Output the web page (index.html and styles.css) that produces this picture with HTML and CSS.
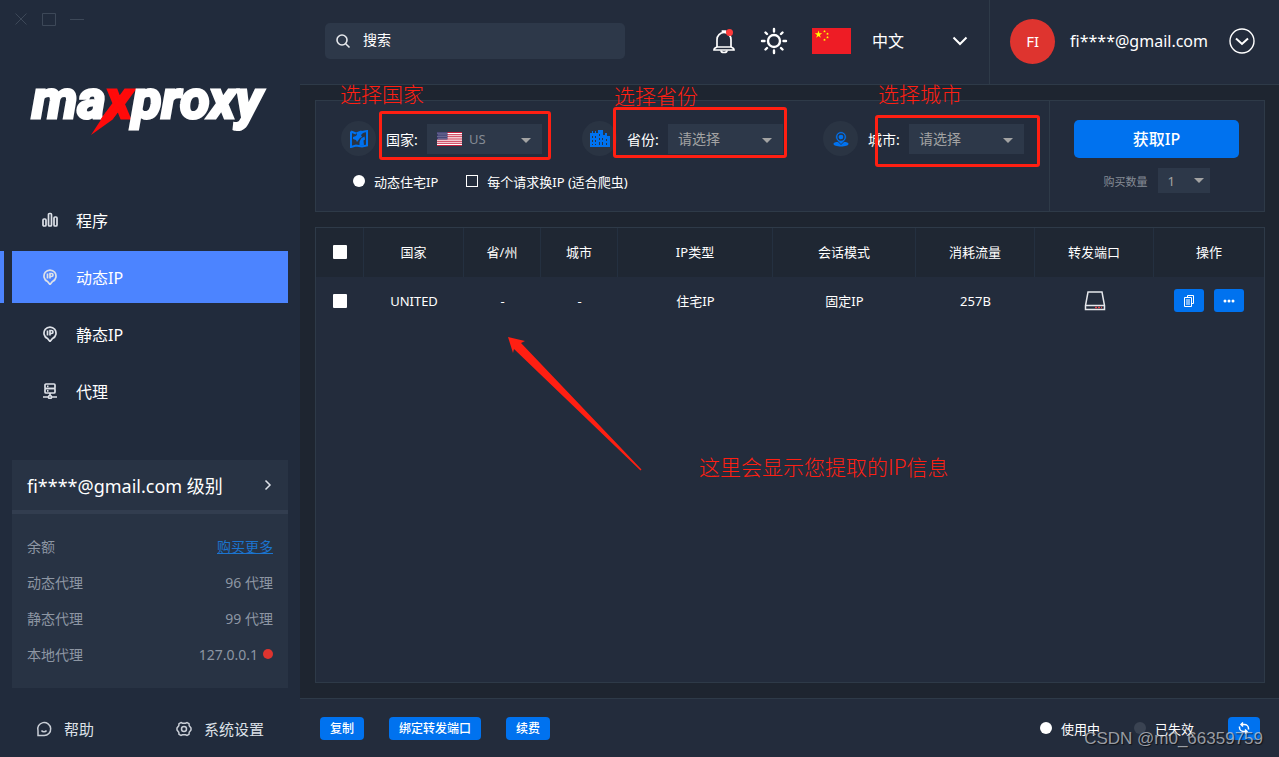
FILE: index.html
```html
<!DOCTYPE html>
<html lang="zh-CN">
<head>
    <meta charset="UTF-8">
    <title>maxproxy</title>
    <link rel="stylesheet" href="styles.css">
</head>
<body>
    <aside class="sidebar">
        <div class="window-buttons">
            <button type="button" aria-label="关闭">
                <svg width="14" height="14" viewBox="0 0 14 14"><path d="M1.500 1.500l11 11M12.500 1.500l-11 11"/></svg>
            </button>
            <button type="button" aria-label="最大化">
                <svg width="14" height="14" viewBox="0 0 14 14"><path d="M.5 1.500h13v12h-13z"/></svg>
            </button>
            <button type="button" aria-label="最小化">
                <svg width="14" height="14" viewBox="0 0 14 14"><path d="M0 7.500h14"/></svg>
            </button>
        </div>

        <div class="logo">
            <span>ma<span class="logo-x">x</span>proxy</span>
            <svg class="logo-tail" width="28" height="28" viewBox="0 0 28 28"><path d="M15 5l13-1-7 9L0 28z"/></svg>
        </div>

        <nav class="menu">
            <a href="#">
                <svg width="16" height="16" viewBox="0 0 16 16"><rect x="1" y="7" width="3" height="7" rx="1"/><rect x="6.500" y="1.500" width="3" height="12.500" rx="1"/><rect x="12" y="5" width="3" height="9" rx="1"/></svg>
                程序
            </a>
            <a href="#" class="active">
                <svg width="16" height="16" viewBox="0 0 16 16"><path d="M8 15.500L5.500 12.500a6 6 0 1 1 5 0z"/><path d="M5.500 4.500v5M8 9.500v-5h1.500a1.500 1.500 0 0 1 0 3H8"/></svg>
                动态IP
            </a>
            <a href="#">
                <svg width="16" height="16" viewBox="0 0 16 16"><path d="M8 15.500L5.500 12.500a6 6 0 1 1 5 0z"/><path d="M5.500 4.500v5M8 9.500v-5h1.500a1.500 1.500 0 0 1 0 3H8"/></svg>
                静态IP
            </a>
            <a href="#">
                <svg width="16" height="16" viewBox="0 0 16 16"><rect x="3" y="1" width="10" height="4.500" rx="1"/><rect x="3" y="5.500" width="10" height="4.500" rx="1"/><path d="M5 3.300h1.500M5 7.800h1.500M8 10v3M1 14h5M10 14h5"/><circle cx="8" cy="14" r="1.500"/></svg>
                代理
            </a>
        </nav>

        <section class="account">
            <a href="#" class="account-title">
                fi****@gmail.com 级别
                <svg width="8" height="12" viewBox="0 0 8 12"><path d="M1.500 1.500L6 6l-4.500 4.500"/></svg>
            </a>
            <div class="account-body">
                <div class="account-row"><span>余额</span><a href="#">购买更多</a></div>
                <div class="account-row"><span>动态代理</span><span>96 代理</span></div>
                <div class="account-row"><span>静态代理</span><span>99 代理</span></div>
                <div class="account-row"><span>本地代理</span><span class="local">127.0.0.1<i class="red-dot"></i></span></div>
            </div>
        </section>

        <div class="side-links">
            <a href="#">
                <svg width="16" height="16" viewBox="0 0 16 16"><path d="M2 14.500h6a6.500 6.500 0 1 0-6-4.500v2z"/><path d="M5.500 9.500a3 3 0 0 0 5 0"/></svg>
                帮助
            </a>
            <a href="#">
                <svg width="16" height="16" viewBox="0 0 16 16"><path d="M5 1.500l1.500.7h3l1.500-.7 2 1.200.2 2 1.800 2.300v2l-1.800 2.300-.2 2-2 1.200-1.500-.7h-3l-1.500.7-2-1.200-.2-2L1 9V7l1.800-2.300.2-2z"/><circle cx="8" cy="8" r="2.500"/></svg>
                系统设置
            </a>
        </div>
    </aside>

    <div class="page">
        <header class="topbar">
            <label class="search">
                <svg width="16" height="16" viewBox="0 0 16 16"><circle cx="7" cy="7" r="5"/><path d="M10.700 10.700L14.500 14.500"/></svg>
                <input type="text" placeholder="搜索" aria-label="搜索">
            </label>
            <div class="tools">
                <button type="button" class="icon-button" aria-label="通知">
                    <svg width="24" height="26" viewBox="0 0 24 26"><path d="M5 19v-7.500a7 7 0 0 1 14 0V19"/><path d="M2 22c0-1.800 1.500-2.500 3-3h14c1.500.5 3 1.200 3 3z"/><path d="M9 22.500a3 2 0 0 0 6 0M10.500 4.200v-1h3v1"/><circle class="alert" cx="17.500" cy="4.500" r="3.500"/></svg>
                </button>
                <button type="button" class="icon-button" aria-label="主题">
                    <svg class="sun" width="28" height="28" viewBox="0 0 28 28"><circle cx="14" cy="14" r="6"/><path d="M14 2v2.500M14 23.500v2.500M2 14h2.500M23.500 14h2.500M5.500 5.500l1.500 1.500M21 21l1.500 1.500M5.500 22.500l1.500-1.500M21 7l1.500-1.500"/></svg>
                </button>
                <div class="language">
                    <svg width="39" height="26" viewBox="0 0 39 26">
                        <path fill="#ee1c25" d="M0 0h39v26H0z"/>
                        <g fill="#ff0">
                            <path d="M6.500 2.600l.9 2.700h2.800L7.900 7l.9 2.700-2.300-1.700-2.300 1.700.9-2.700-2.300-1.700h2.800z"/>
                            <path d="M12.500 2l.4.800.9.1-.6.600.1.900-.8-.4-.8.400.1-.9-.6-.6.900-.1z"/>
                            <path d="M15.500 4.500l.4.800.9.1-.6.600.1.900-.8-.4-.8.400.1-.9-.6-.6.900-.1z"/>
                            <path d="M15.500 8l.4.800.9.1-.6.600.1.900-.8-.4-.8.400.1-.9-.6-.6.900-.1z"/>
                            <path d="M12.500 10.500l.4.800.9.1-.6.600.1.900-.8-.4-.8.400.1-.9-.6-.6.900-.1z"/>
                        </g>
                    </svg>
                    <select aria-label="语言"><option>中文</option></select>
                    <svg class="chevron" width="16" height="10" viewBox="0 0 16 10"><path d="M1.500 1.500L8 8l6.500-6.500"/></svg>
                </div>
            </div>
            <div class="user">
                <span class="avatar">FI</span>
                <span class="email">fi****@gmail.com</span>
                <button type="button" class="icon-button" aria-label="账户菜单">
                    <svg class="user-menu" width="26" height="26" viewBox="0 0 26 26"><circle cx="13" cy="13" r="12"/><path class="thick" d="M7 10.500l6 5.500 6-5.500"/></svg>
                </button>
            </div>
        </header>

        <main class="content">
            <form class="filters">
                <div class="filters-main">
                    <div class="fields">
                        <div class="field">
                            <span class="field-icon">
                                <svg width="18" height="18" viewBox="0 0 18 18"><path fill="none" stroke="#0072ef" stroke-width="2" d="M1 1.500l5 2M12 2l5-1v14.500l-5 1-6-1-5 1.500V1.500"/><path d="M6 2.500L11 .5l3 1.500-3 3 1 2-2 1-3 4-1-2-3-1V7l3-1 1-1.500zM11 8.500l3.500-2 .5 3-1.500 1 .5 5-4.500.5v-4z"/></svg>
                            </span>
                            <label for="country">国家:</label>
                            <div class="select">
                                <svg class="us-flag" width="25" height="14" viewBox="0 0 25 14">
                                    <path fill="#fff" d="M0 0h25v14H0z"/>
                                    <path stroke="#c8203f" stroke-width="1.100" d="M0 .5h25M0 2.700h25M0 4.800h25M0 7h25M0 9.200h25M0 11.300h25M0 13.500h25"/>
                                    <path fill="#3c3b6e" d="M0 0h10.500v7.500H0z"/>
                                    <path stroke="#b9b9d0" stroke-width=".8" stroke-dasharray="1 1" d="M.5 1.200h9.500M1.500 2.900h8.500M.5 4.600h9.500M1.500 6.300h8.500"/>
                                </svg>
                                <select id="country" class="with-flag"><option>US</option></select>
                            </div>
                            <span class="mark mark-country"></span>
                            <span class="note note-country">选择国家</span>
                        </div>
                        <div class="field">
                            <span class="field-icon">
                                <svg width="20" height="18" viewBox="0 0 20 18"><path fill-rule="evenodd" d="M0 3h2V1h1v2h2V1h1v2h2V0h5v5h2V3h2v3h3v11H0zM2 6v2h1V6zM5 6v2h1V6zM2 10v2h1v-2zM5 10v2h1v-2zM2 14v1h1v-1zM5 14v1h1v-1zM9 4v2h1V4zM9 8v2h1V8zM9 12v3h1v-3zM12 8v2h1V8zM12 12v3h1v-3zM16 9v2h1V9zM16 13v2h1v-2z"/></svg>
                            </span>
                            <label for="province">省份:</label>
                            <div class="select">
                                <select id="province"><option>请选择</option></select>
                            </div>
                            <span class="mark mark-province"></span>
                            <span class="note note-province">选择省份</span>
                        </div>
                        <div class="field">
                            <span class="field-icon">
                                <svg width="16" height="16" viewBox="0 0 16 16"><path d="M3 11h10c1.500.5 2.500 1 2.500 2 0 1.500-3.500 2.500-7.500 2.500S.5 14.500.5 13c0-1 1-1.500 2.500-2z"/><path stroke="#2a3443" stroke-width=".8" d="M8 13.500L4.200 9.800a5.400 5.400 0 1 1 7.600 0z"/><circle cx="8" cy="6" r="3" fill="none" stroke="#2a3443" stroke-width="1.300"/></svg>
                            </span>
                            <label for="city">城市:</label>
                            <div class="select">
                                <select id="city"><option>请选择</option></select>
                            </div>
                            <span class="mark mark-city"></span>
                            <span class="note note-city">选择城市</span>
                        </div>
                    </div>
                    <div class="options">
                        <label><input type="radio" name="type" class="dot" checked>动态住宅IP</label>
                        <label><input type="checkbox" class="box-outline">每个请求换IP (适合爬虫)</label>
                    </div>
                </div>
                <div class="filters-side">
                    <button type="button" class="get-ip">获取IP</button>
                    <div class="amount">
                        <label for="amount">购买数量</label>
                        <div class="select small">
                            <select id="amount"><option>1</option></select>
                        </div>
                    </div>
                </div>
            </form>

            <section class="list">
                <table>
                    <colgroup>
                        <col class="w-check"><col class="w-country"><col class="w-area"><col class="w-area"><col class="w-type"><col class="w-mode"><col class="w-flow"><col class="w-flow"><col class="w-action">
                    </colgroup>
                    <thead>
                        <tr>
                            <th><input type="checkbox" class="box" aria-label="全选"></th>
                            <th>国家</th>
                            <th>省/州</th>
                            <th>城市</th>
                            <th>IP类型</th>
                            <th>会话模式</th>
                            <th>消耗流量</th>
                            <th>转发端口</th>
                            <th>操作</th>
                        </tr>
                    </thead>
                    <tbody>
                        <tr>
                            <td><input type="checkbox" class="box" aria-label="选择"></td>
                            <td>UNITED</td>
                            <td>-</td>
                            <td>-</td>
                            <td>住宅IP</td>
                            <td>固定IP</td>
                            <td>257B</td>
                            <td>
                                <svg class="port" width="22" height="20" viewBox="0 0 22 20"><path d="M4 1h14l2.500 13.500v4h-19v-4zM1.500 14.500h19"/><path class="port-light" d="M11 16.500h7"/></svg>
                            </td>
                            <td>
                                <div class="actions">
                                    <button type="button" aria-label="复制">
                                        <svg width="12" height="12" viewBox="0 0 12 12"><path d="M4.500 2.500v-2h6v8h-2M1.500 2.500h7v9h-7zM3 5h4M3 7h4M3 9h4"/></svg>
                                    </button>
                                    <button type="button" aria-label="更多">
                                        <svg class="dots" width="12" height="4" viewBox="0 0 12 4"><circle cx="2" cy="2" r="1.500"/><circle cx="6" cy="2" r="1.500"/><circle cx="10" cy="2" r="1.500"/></svg>
                                    </button>
                                </div>
                            </td>
                        </tr>
                    </tbody>
                </table>
                <svg class="arrow" width="136" height="136" viewBox="0 0 136 136"><path d="M1 1l17 4-4 2L134.500 133.500l-1 1L7 13l-1 4z"/></svg>
                <span class="note note-list">这里会显示您提取的IP信息</span>
            </section>
        </main>

        <footer class="bottombar">
            <button type="button">复制</button>
            <button type="button">绑定转发端口</button>
            <button type="button">续费</button>
            <div class="states">
                <label><input type="radio" name="state" class="dot" checked>使用中</label>
                <label><input type="radio" name="state" class="dot off">已失效</label>
                <button type="button" class="refresh" aria-label="刷新">
                    <svg width="12" height="12" viewBox="0 0 12 12"><path d="M3.500 2.500h3a4 4 0 0 1 4 4v1M8.500 9.500h-3a4 4 0 0 1-4-4v-1M5 .5l-2 2 2 2M7 7.500l2 2-2 2"/></svg>
                </button>
            </div>
            <span class="watermark">CSDN @m0_66359759</span>
        </footer>
    </div>
</body>
</html>
```

FILE: styles.css
```css
* {
    box-sizing: border-box;
}
body {
    margin: 0;
    min-height: 100vh;
    display: flex;
    background-color: #1e2530;
    color: #fff;
    font-family: "Noto Sans", "Noto Sans CJK SC", sans-serif;
    font-size: 13px;
}
a {
    color: inherit;
    text-decoration: none;
}
button, input, select {
    font: inherit;
    color: inherit;
    margin: 0;
}
button {
    border: none;
    padding: 0;
    background: none;
    cursor: pointer;
}
svg {
    display: block;
    flex: none;
}

/* sidebar */
.sidebar {
    flex: none;
    width: 300px;
    display: flex;
    flex-direction: column;
    background-color: #212b3c;
}
.window-buttons {
    display: flex;
    gap: 14px;
    padding: 12px 14px;
}
.window-buttons svg {
    fill: none;
    stroke: #3d4858;
}
.logo {
    position: relative;
    height: 84px;
    margin: 20px 0 52px;
    padding-left: 32px;
    font-family: Roboto, "Liberation Sans", sans-serif;
    font-size: 54px;
    font-weight: bold;
    font-style: italic;
    line-height: 84px;
    -webkit-text-stroke: 3px;
}
.logo-x {
    color: #ff0a0a;
}
.logo-tail {
    position: absolute;
    left: 91px;
    top: 49px;
    fill: #ff0a0a;
}
.menu {
    display: flex;
    flex-direction: column;
    gap: 5px;
    padding: 0 12px;
}
.menu a {
    position: relative;
    display: flex;
    align-items: center;
    gap: 18px;
    height: 52px;
    padding-left: 30px;
    font-size: 16px;
}
.menu svg {
    fill: none;
    stroke: #dde1e8;
    stroke-width: 1.7;
}
.menu a.active {
    background-color: #4c84ff;
}
.menu a.active::before {
    content: "";
    position: absolute;
    left: -12px;
    top: 0;
    width: 4px;
    height: 100%;
    background-color: #4c84ff;
}
.account {
    margin: auto 12px 0;
    background-color: #283344;
}
.account-title {
    display: flex;
    align-items: center;
    justify-content: space-between;
    height: 54px;
    padding: 0 16px 0 15px;
    border-bottom: 4px solid #323d4f;
    font-size: 18px;
}
.account-title svg {
    fill: none;
    stroke: #dde1e8;
    stroke-width: 1.5;
}
.account-body {
    padding: 14px 15px 16px;
    color: #8d96a3;
    font-size: 14px;
}
.account-row {
    display: flex;
    align-items: center;
    justify-content: space-between;
    height: 36px;
}
.account-row a {
    color: #1b74cf;
    text-decoration: underline;
}
.local {
    display: flex;
    align-items: center;
    gap: 5px;
}
.red-dot {
    width: 10px;
    height: 10px;
    border-radius: 50%;
    background-color: #de342f;
}
.side-links {
    display: flex;
    justify-content: space-between;
    padding: 27px 36px 15px;
    color: #dde1e8;
    font-size: 15px;
}
.side-links a {
    display: flex;
    align-items: center;
    gap: 12px;
    height: 27px;
}
.side-links svg {
    fill: none;
    stroke: #c9ced6;
    stroke-width: 1.5;
}

/* top bar */
.page {
    flex: 1;
    display: flex;
    flex-direction: column;
}
.topbar {
    display: flex;
    align-items: center;
    height: 85px;
    padding-left: 25px;
    border-bottom: 1px solid #2e3a48;
    background-color: #232c3c;
}
.search {
    display: flex;
    align-items: center;
    gap: 12px;
    width: 300px;
    height: 36px;
    margin-bottom: 2px;
    padding: 0 10px;
    border-radius: 5px;
    background-color: #2d3849;
}
.search svg {
    fill: none;
    stroke: #e6e8ec;
    stroke-width: 1.6;
}
.search input {
    flex: 1;
    min-width: 0;
    height: 32px;
    border: none;
    outline: none;
    padding: 0 0 3px;
    background: none;
    font-size: 14px;
}
.search input::placeholder {
    color: #fff;
}
.tools {
    display: flex;
    align-items: center;
    gap: 24px;
    margin-left: auto;
    padding: 0 20px 3px 0;
}
.icon-button svg {
    fill: none;
    stroke: #fff;
    stroke-width: 1.7;
}
.icon-button .sun {
    stroke-width: 2.4;
    stroke-linecap: round;
}
.icon-button .alert {
    fill: #ff3b3b;
    stroke: none;
}
.language {
    position: relative;
    display: flex;
    align-items: center;
    gap: 21px;
}
.language select {
    width: 97px;
    border: none;
    appearance: none;
    background: none;
    font-size: 16px;
}
.chevron {
    position: absolute;
    right: 1px;
    fill: none;
    stroke: #fff;
    stroke-width: 2;
    pointer-events: none;
}
.user {
    display: flex;
    align-items: center;
    align-self: stretch;
    padding: 0 24px 2px 20px;
    border-left: 1px solid #2e3a48;
}
.avatar {
    width: 45px;
    height: 45px;
    border-radius: 50%;
    background-color: #de342f;
    font-size: 15px;
    line-height: 45px;
    text-align: center;
}
.email {
    margin: 0 21px 0 15px;
    font-size: 16px;
}
.icon-button .user-menu {
    stroke-width: 1.4;
}
.icon-button .thick {
    stroke-width: 2;
}

/* filters */
.content {
    flex: 1;
    display: flex;
    flex-direction: column;
    gap: 15px;
    padding: 15px 14px 15px 15px;
}
.filters {
    display: flex;
    border: 1px solid #2e3a48;
    background-color: #232c3c;
}
.filters-main {
    flex: 1;
    padding: 20px 0 20px 25px;
}
.fields {
    display: flex;
    gap: 40px;
}
.field {
    position: relative;
    display: flex;
    align-items: center;
    width: 201px;
}
.field-icon {
    display: grid;
    place-items: center;
    width: 35px;
    height: 35px;
    margin-right: 10px;
    border-radius: 50%;
    background-color: #2a3443;
    fill: #0072ef;
}
.field label {
    width: 41px;
    font-size: 14px;
    white-space: nowrap;
}
.select {
    position: relative;
    width: 115px;
}
.select select {
    display: block;
    width: 100%;
    height: 30px;
    padding: 0 10px;
    border: none;
    border-radius: 0;
    appearance: none;
    background-color: #2d3849;
    color: #a3a3a3;
    font-size: 14px;
}
.select select.with-flag {
    padding-left: 42px;
    color: #858b95;
    font-size: 13px;
}
.select::after {
    content: "";
    position: absolute;
    right: 11px;
    top: 14px;
    border: 5px solid transparent;
    border-top-color: #a3a3a3;
    border-bottom: none;
    pointer-events: none;
}
.us-flag {
    position: absolute;
    left: 10px;
    top: 8px;
}
.options {
    display: flex;
    gap: 28px;
    height: 20px;
    margin: 15px 0 0 12px;
}
.options label, .states label {
    display: flex;
    align-items: center;
    gap: 9px;
}
.dot, .box, .box-outline {
    appearance: none;
    width: 12px;
    height: 12px;
}
.dot {
    border-radius: 50%;
    background-color: #fff;
}
.dot.off {
    background-color: #3a4352;
}
.box {
    display: block;
    width: 14px;
    height: 14px;
    margin: 0 auto;
    border-radius: 1px;
    background-color: #fff;
}
.box-outline {
    border: 1px solid #fff;
}
.filters-side {
    width: 215px;
    padding: 19px 25px 0 24px;
    border-left: 1px solid #2e3a48;
}
.get-ip {
    display: block;
    width: 100%;
    height: 38px;
    padding-bottom: 3px;
    border-radius: 5px;
    background-color: #0072ef;
    font-size: 16px;
    font-weight: 500;
}
.amount {
    display: flex;
    align-items: center;
    justify-content: center;
    gap: 10px;
    margin-top: 10px;
    color: #858b95;
    font-size: 11px;
}
.select.small {
    width: 52px;
}
.select.small select {
    height: 25px;
    font-size: 13px;
}
.select.small::after {
    right: 6px;
    top: 10px;
}

/* red marks and notes */
.mark {
    position: absolute;
    border: 3px solid #ff1f12;
    border-radius: 3px;
    pointer-events: none;
}
.mark-country {
    left: 38px;
    top: -10px;
    width: 172px;
    height: 49px;
}
.mark-province {
    left: 31px;
    top: -14px;
    width: 174px;
    height: 51px;
}
.mark-city {
    left: 52px;
    top: -6px;
    width: 165px;
    height: 52px;
}
.note {
    position: absolute;
    color: #ff1f12;
    font-family: "Noto Sans CJK SC", sans-serif;
    font-size: 21px;
    font-weight: 300;
    line-height: 28px;
    white-space: nowrap;
}
.note-country {
    left: -1px;
    top: -42px;
}
.note-province {
    left: 32px;
    top: -40px;
}
.note-city {
    left: 55px;
    top: -42px;
}
.note-list {
    left: 383px;
    top: 224px;
}
.arrow {
    position: absolute;
    left: 191px;
    top: 108px;
    fill: #ff1f12;
}

/* ip list */
.list {
    position: relative;
    flex: 1;
    border: 1px solid #2e3a48;
    background-color: #232c3c;
}
table {
    width: 100%;
    table-layout: fixed;
    border-collapse: separate;
    border-spacing: 0;
    text-align: center;
}
th {
    height: 49px;
    padding: 0 0 2px;
    border-right: 1px solid #243040;
    background-color: #1f2733;
    font-weight: 400;
}
th:last-child {
    border-right: none;
}
td {
    height: 47px;
    padding: 0;
}
.w-check { width: 48px; }
.w-country { width: 100px; }
.w-area { width: 77px; }
.w-type { width: 155px; }
.w-mode { width: 143px; }
.w-flow { width: 119px; }
.w-action { width: 110px; }
.port {
    margin: 0 auto;
    fill: none;
    stroke: #e6e8ec;
    stroke-width: 1.5;
}
.port-light {
    stroke: #e5484d;
    stroke-dasharray: 2 1;
}
.actions {
    display: flex;
    justify-content: center;
    gap: 10px;
}
.actions button {
    display: grid;
    place-items: center;
    width: 30px;
    height: 23px;
    border-radius: 3px;
    background-color: #0072ef;
}
.actions svg {
    fill: none;
    stroke: #fff;
}
.actions .dots {
    fill: #fff;
    stroke: none;
}

/* bottom bar */
.bottombar {
    position: relative;
    display: flex;
    align-items: center;
    gap: 25px;
    height: 59px;
    padding: 0 19px 0 20px;
    border-top: 1px solid #2e3a48;
    background-color: #232c3c;
}
.bottombar button {
    height: 23px;
    padding: 0 10px;
    border-radius: 4px;
    background-color: #0072ef;
    font-size: 12px;
    font-weight: 500;
}
.states {
    display: flex;
    align-items: center;
    gap: 34px;
    margin-left: auto;
}
.refresh svg {
    fill: none;
    stroke: #fff;
    stroke-width: 1.5;
}
.watermark {
    position: absolute;
    right: 16px;
    bottom: 8px;
    color: rgba(210, 212, 216, 0.7);
    font-family: "Liberation Sans", sans-serif;
    font-size: 17px;
    line-height: 20px;
    text-shadow: 1px 1px 1px rgba(0, 0, 0, 0.6);
    pointer-events: none;
}
```
